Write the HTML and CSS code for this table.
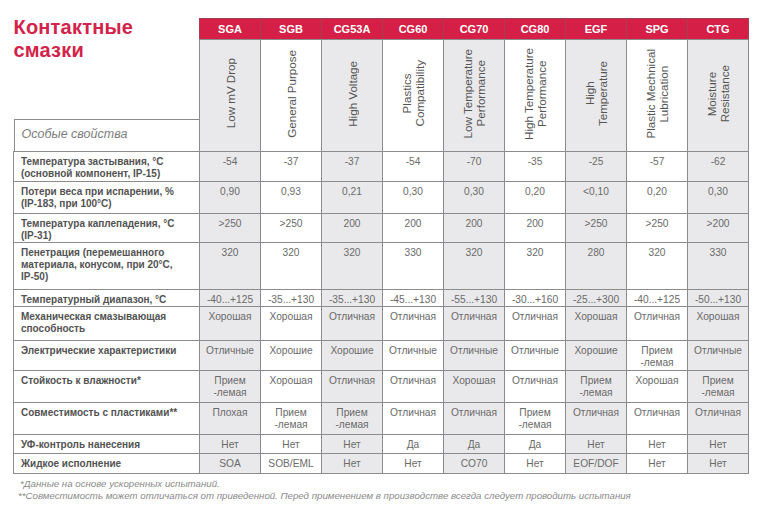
FILE: index.html
```html
<!DOCTYPE html>
<html lang="ru">
<head>
<meta charset="utf-8">
<title>Контактные смазки</title>
<link rel="stylesheet" href="styles.css">
</head>
<body>
<div class="page">
<table class="grid">
<colgroup>
<col class="c-label"><col class="c-val"><col class="c-val"><col class="c-val"><col class="c-val"><col class="c-val"><col class="c-val"><col class="c-val"><col class="c-val"><col class="c-val">
</colgroup>
<thead>
<tr class="codes">
<th class="corner" rowspan="2">
<div class="corner-in">
<h1 class="title">Контактные<br>смазки</h1>
<div class="props">Особые свойства</div>
</div>
</th>
<th>SGA</th><th>SGB</th><th>CG53A</th><th>CG60</th><th>CG70</th><th>CG80</th><th>EGF</th><th>SPG</th><th>CTG</th>
</tr>
<tr class="names">
<th><span class="rot">Low mV Drop</span></th>
<th><span class="rot">General Purpose</span></th>
<th><span class="rot">High Voltage</span></th>
<th><span class="rot">Plastics<br>Compatibility</span></th>
<th><span class="rot">Low Temperature<br>Performance</span></th>
<th><span class="rot">High Temperature<br>Performance</span></th>
<th><span class="rot">High<br>Temperature</span></th>
<th><span class="rot">Plastic Mechnical<br>Lubrication</span></th>
<th><span class="rot">Moisture<br>Resistance</span></th>
</tr>
</thead>
<tbody>
<tr class="h30"><td>Температура застывания, °C<br>(основной компонент, IP-15)</td><td>-54</td><td>-37</td><td>-37</td><td>-54</td><td>-70</td><td>-35</td><td>-25</td><td>-57</td><td>-62</td></tr>
<tr class="h32"><td>Потери веса при испарении, %<br>(IP-183, при 100°C)</td><td>0,90</td><td>0,93</td><td>0,21</td><td>0,30</td><td>0,30</td><td>0,20</td><td>&lt;0,10</td><td>0,20</td><td>0,30</td></tr>
<tr class="h29"><td>Температура каплепадения, °C<br>(IP-31)</td><td>&gt;250</td><td>&gt;250</td><td>200</td><td>200</td><td>200</td><td>200</td><td>&gt;250</td><td>&gt;250</td><td>&gt;200</td></tr>
<tr class="h47"><td>Пенетрация (перемешанного<br>материала, конусом, при 20°C,<br>IP-50)</td><td>320</td><td>320</td><td>320</td><td>330</td><td>320</td><td>320</td><td>280</td><td>320</td><td>330</td></tr>
<tr class="h17"><td>Температурный диапазон, °C</td><td>-40...+125</td><td>-35...+130</td><td>-35...+130</td><td>-45...+130</td><td>-55...+130</td><td>-30...+160</td><td>-25...+300</td><td>-40...+125</td><td>-50...+130</td></tr>
<tr class="h34"><td>Механическая смазывающая<br>способность</td><td>Хорошая</td><td>Хорошая</td><td>Отличная</td><td>Отличная</td><td>Отличная</td><td>Отличная</td><td>Хорошая</td><td>Отличная</td><td>Хорошая</td></tr>
<tr class="h30"><td>Электрические характеристики</td><td>Отличные</td><td>Хорошие</td><td>Хорошие</td><td>Отличные</td><td>Отличные</td><td>Отличные</td><td>Хорошие</td><td>Прием<br>-лемая</td><td>Отличные</td></tr>
<tr class="h32"><td>Стойкость к влажности*</td><td>Прием<br>-лемая</td><td>Хорошая</td><td>Отличная</td><td>Отличная</td><td>Хорошая</td><td>Отличная</td><td>Прием<br>-лемая</td><td>Хорошая</td><td>Прием<br>-лемая</td></tr>
<tr class="h32"><td>Совместимость с пластиками**</td><td>Плохая</td><td>Прием<br>-лемая</td><td>Прием<br>-лемая</td><td>Отличная</td><td>Отличная</td><td>Прием<br>-лемая</td><td>Отличная</td><td>Отличная</td><td>Отличная</td></tr>
<tr class="h19"><td>УФ-контроль нанесения</td><td>Нет</td><td>Нет</td><td>Нет</td><td>Да</td><td>Да</td><td>Да</td><td>Нет</td><td>Нет</td><td>Нет</td></tr>
<tr class="h20"><td>Жидкое исполнение</td><td>SOA</td><td>SOB/EML</td><td>Нет</td><td>Нет</td><td>CO70</td><td>Нет</td><td>EOF/DOF</td><td>Нет</td><td>Нет</td></tr>
</tbody>
</table>
<div class="notes">
<p class="n1">*Данные на основе ускоренных испытаний.</p>
<p class="n2">**Совместимость может отличаться от приведенной. Перед применением в производстве всегда следует проводить испытания</p>
</div>
</div>
</body>
</html>
```

FILE: styles.css
```css
html, body {
  margin: 0;
  padding: 0;
  background: #ffffff;
}
body {
  font-family: "Liberation Sans", Arial, sans-serif;
}
.page {
  padding: 18px 0 0 13px;
}
.grid {
  border-collapse: collapse;
  table-layout: fixed;
  width: 735px;
}
.c-label { width: 186px; }
.c-val { width: 61px; }

.codes th {
  height: 20px;
  padding: 0;
  background: #d51f46;
  color: #ffffff;
  font-size: 11px;
  font-weight: bold;
  text-align: center;
  vertical-align: middle;
  border: 1px solid #a3404f;
  border-bottom-color: #8c8c8c;
}
.codes th.corner {
  background: #ffffff;
  border: none;
  border-bottom: 1px solid #8c8c8c;
  padding: 0;
  vertical-align: top;
  text-align: left;
}
.corner-in {
  height: 132px;
  display: flex;
  flex-direction: column;
  justify-content: space-between;
}
.title {
  margin: -3px 0 0 0;
  font-size: 20px;
  line-height: 23.5px;
  font-weight: bold;
  color: #d2234b;
  letter-spacing: 0.2px;
}
.props {
  height: 32px;
  box-sizing: border-box;
  border-left: 1px solid #8c8c8c;
  border-top: 1px solid #8c8c8c;
  padding: 7px 0 0 7px;
  font-size: 12.5px;
  font-style: italic;
  font-weight: normal;
  color: #7d7d7d;
}
.names th {
  height: 111px;
  padding: 0;
  border: 1px solid #8c8c8c;
  text-align: center;
  vertical-align: middle;
  background: #ffffff;
  font-weight: normal;
}
.names th:nth-child(odd) {
  background: #e9e9eb;
}
.rot {
  display: inline-block;
  writing-mode: vertical-rl;
  transform: rotate(180deg);
  font-size: 11.6px;
  line-height: 13px;
  color: #555555;
  text-align: center;
  white-space: nowrap;
}

tbody td {
  border: 1px solid #8c8c8c;
  padding: 4px 0 0 0;
  vertical-align: top;
  text-align: center;
  font-size: 10.2px;
  line-height: 12px;
  color: #6a6a6a;
  background: #ffffff;
}
tbody td:nth-child(even) {
  background: #e9e9eb;
}
tbody td:first-child {
  text-align: left;
  padding-left: 7px;
  font-weight: bold;
  color: #525252;
  font-size: 10px;
}
.h17 { height: 17px; }
.h19 { height: 19px; }
.h20 { height: 20px; }
.h29 { height: 29px; }
.h30 { height: 30px; }
.h32 { height: 32px; }
.h34 { height: 34px; }
.h47 { height: 47px; }

.notes {
  padding: 4px 0 0 5px;
  font-size: 9.7px;
  font-style: italic;
  color: #8a8a8a;
  line-height: 12px;
}
.notes p {
  margin: 0;
}
.n1 {
  padding-left: 2px;
}
```
